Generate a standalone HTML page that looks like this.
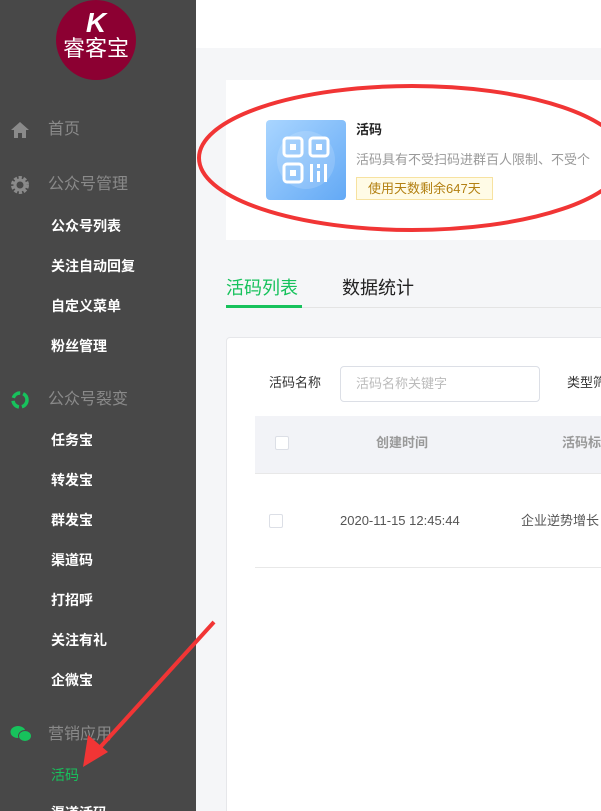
<!DOCTYPE html>
<html><head><meta charset="utf-8"><style>
*{margin:0;padding:0;box-sizing:border-box}
html,body{width:601px;height:811px;overflow:hidden}
body{background:#f5f6f8;font-family:"Liberation Sans","Noto Sans CJK SC",sans-serif;position:relative}
.sb{position:absolute;left:0;top:0;width:196px;height:811px;background:#484848;overflow:hidden}
.logo{position:absolute;left:56px;top:0;width:80px;height:80px;border-radius:50%;background:#8c0032;color:#fff;text-align:center}
.grp{position:absolute;left:48px;font-size:16px;line-height:20px;color:#8a8a8a}
.it{position:absolute;left:51px;font-size:14px;line-height:20px;color:#fff;font-weight:bold}
.ic{position:absolute;left:10px}
.hdr{position:absolute;left:196px;top:0;width:405px;height:48px;background:#fff}
.card{position:absolute;left:226px;top:80px;width:375px;height:160px;background:#fff}
.tbl{position:absolute;left:226px;top:337px;width:380px;height:480px;background:#fff;border:1px solid #e6e7ea;border-radius:4px}
.t{position:absolute;font-size:13px;line-height:18px;white-space:nowrap}
</style></head><body>
<div class="sb">
 <div class="logo"><div style="font-size:28px;font-weight:bold;line-height:30px;padding-top:8px;font-style:italic">K</div><div style="font-size:22px;line-height:26px;margin-top:-2px">睿客宝</div></div>
 <svg class="ic" style="top:120px" width="20" height="20" viewBox="0 0 20 20"><path d="M10 2L1 10h3v8h4v-5h4v5h4v-8h3z" fill="#8a8a8a"/></svg>
 <div class="grp" style="top:120px">首页</div>
 <svg class="ic" style="top:175px" width="20" height="20" viewBox="0 0 20 20"><circle cx="10" cy="10" r="7" fill="none" stroke="#8a8a8a" stroke-width="4" stroke-dasharray="3 1.5"/><circle cx="10" cy="10" r="5" fill="none" stroke="#8a8a8a" stroke-width="3"/></svg>
 <div class="grp" style="top:175px">公众号管理</div>
 <div class="it" style="top:216px">公众号列表</div>
 <div class="it" style="top:256px">关注自动回复</div>
 <div class="it" style="top:296px">自定义菜单</div>
 <div class="it" style="top:336px">粉丝管理</div>
 <svg class="ic" style="top:390px" width="20" height="20" viewBox="0 0 20 20"><circle cx="10" cy="10" r="7" fill="none" stroke="#17c25c" stroke-width="3.5" stroke-dasharray="9 3"/></svg>
 <div class="grp" style="top:390px">公众号裂变</div>
 <div class="it" style="top:430px">任务宝</div>
 <div class="it" style="top:470px">转发宝</div>
 <div class="it" style="top:510px">群发宝</div>
 <div class="it" style="top:550px">渠道码</div>
 <div class="it" style="top:590px">打招呼</div>
 <div class="it" style="top:630px">关注有礼</div>
 <div class="it" style="top:670px">企微宝</div>
 <svg class="ic" style="top:725px" width="22" height="18" viewBox="0 0 22 18"><ellipse cx="8" cy="7" rx="7.5" ry="6" fill="#17c25c"/><ellipse cx="15" cy="11" rx="6.5" ry="5.5" fill="#17c25c" stroke="#484848"/></svg>
 <div class="grp" style="top:725px">营销应用</div>
 <div class="it" style="top:765px;color:#17c25c;font-weight:normal">活码</div>
 <div class="it" style="top:803px">渠道活码</div>
</div>
<div class="hdr"></div>
<div class="card">
 <div style="position:absolute;left:40px;top:40px;width:80px;height:80px;border-radius:4px;background:linear-gradient(135deg,#a9d5ff,#63a9f5)">
  <svg width="80" height="80" viewBox="0 0 80 80"><circle cx="40" cy="40" r="29" fill="rgba(255,255,255,0.15)"/><g fill="none" stroke="#fff" stroke-width="3"><rect x="18" y="18" width="18" height="18" rx="3"/><rect x="44" y="18" width="18" height="18" rx="3"/><rect x="18" y="44" width="18" height="18" rx="3"/></g><g fill="#fff"><rect x="24" y="24" width="6" height="6"/><rect x="50" y="24" width="6" height="6"/><rect x="24" y="50" width="6" height="6"/><rect x="44" y="44" width="3" height="18"/><rect x="51" y="44" width="3" height="4"/><rect x="51" y="51" width="3" height="11"/><rect x="58" y="44" width="3" height="18"/></g></svg>
 </div>
 <div class="t" style="left:130px;top:41px;font-weight:bold;color:#222">活码</div>
 <div class="t" style="left:130px;top:71px;color:#999">活码具有不受扫码进群百人限制、不受个</div>
 <div style="position:absolute;left:130px;top:97px;height:23px;padding:0 11px;line-height:21px;border:1px solid #f7e2a0;background:#fffbe6;color:#b38012;font-size:13px;white-space:nowrap">使用天数剩余647天</div>
</div>
<svg style="position:absolute;left:0;top:0;pointer-events:none" width="601" height="811"><ellipse cx="412" cy="158" rx="213" ry="72" fill="none" stroke="#f13535" stroke-width="4"/><line x1="214" y1="622" x2="94" y2="754" stroke="#f13535" stroke-width="4"/><polygon points="83,767 88,735 108,752" fill="#f13535"/></svg>
<div style="position:absolute;left:226px;top:276px;font-size:18px;line-height:24px;color:#17c25c">活码列表</div>
<div style="position:absolute;left:342px;top:276px;font-size:18px;line-height:24px;color:#222">数据统计</div>
<div style="position:absolute;left:226px;top:307px;width:375px;height:1px;background:#e4e4e4"></div>
<div style="position:absolute;left:226px;top:305px;width:76px;height:3px;background:#17c25c"></div>
<div class="tbl">
 <div class="t" style="left:42px;top:36px;color:#333">活码名称</div>
 <div style="position:absolute;left:113px;top:28px;width:200px;height:36px;border:1px solid #dcdfe6;border-radius:4px;padding-left:15px;line-height:34px;font-size:13px;color:#bbb">活码名称关键字</div>
 <div class="t" style="left:340px;top:36px;color:#333">类型筛</div>
 <div style="position:absolute;left:28px;top:78px;width:360px;height:58px;background:#f2f3f7;border-bottom:1px solid #e8e8e8"></div>
 <div style="position:absolute;left:48px;top:98px;width:14px;height:14px;border:1px solid #dcdfe6;background:#fff;border-radius:2px"></div>
 <div class="t" style="left:149px;top:96px;color:#999;font-weight:bold">创建时间</div>
 <div class="t" style="left:335px;top:96px;color:#999;font-weight:bold">活码标</div>
 <div style="position:absolute;left:42px;top:176px;width:14px;height:14px;border:1px solid #dcdfe6;border-radius:2px"></div>
 <div class="t" style="left:113px;top:174px;color:#555">2020-11-15 12:45:44</div>
 <div class="t" style="left:294px;top:174px;color:#555">企业逆势增长</div>
 <div style="position:absolute;left:28px;top:229px;width:360px;height:1px;background:#e8e8e8"></div>
</div>
</body></html>
